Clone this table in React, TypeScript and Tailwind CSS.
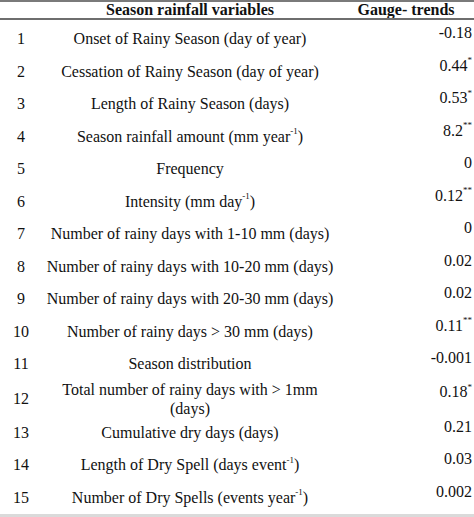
import React from "react";

type Row = { n: string; label: React.ReactNode; v: React.ReactNode; tall?: boolean };

const Sup = ({ children }: { children: React.ReactNode }) => (
  <sup className="text-[9px] relative top-[-1px] align-super leading-none">{children}</sup>
);

const rows: Row[] = [
  { n: "1", label: "Onset of Rainy Season (day of year)", v: <>-0.18</> },
  { n: "2", label: "Cessation of Rainy Season (day of year)", v: <>0.44<Sup>*</Sup></> },
  { n: "3", label: "Length of Rainy Season (days)", v: <>0.53<Sup>*</Sup></> },
  { n: "4", label: <>Season rainfall amount (mm year<Sup>-1</Sup>)</>, v: <>8.2<Sup>**</Sup></> },
  { n: "5", label: "Frequency", v: <>0</> },
  { n: "6", label: <>Intensity (mm day<Sup>-1</Sup>)</>, v: <>0.12<Sup>**</Sup></> },
  { n: "7", label: "Number of rainy days with 1-10 mm (days)", v: <>0</> },
  { n: "8", label: "Number of rainy days with 10-20 mm (days)", v: <>0.02</> },
  { n: "9", label: "Number of rainy days with 20-30 mm (days)", v: <>0.02</> },
  { n: "10", label: "Number of rainy days >  30 mm (days)", v: <>0.11<Sup>**</Sup></> },
  { n: "11", label: "Season distribution", v: <>-0.001</> },
  { n: "12", label: <>Total number of rainy days with &gt; 1mm<br />(days)</>, v: <>0.18<Sup>*</Sup></>, tall: true },
  { n: "13", label: "Cumulative dry days (days)", v: <>0.21</> },
  { n: "14", label: <>Length of Dry Spell (days event<Sup>-1</Sup>)</>, v: <>0.03</> },
  { n: "15", label: <>Number of Dry Spells (events year<Sup>-1</Sup>)</>, v: <>0.002</> },
];

export default function App() {
  return (
    <div
      className="w-[474px] h-[517px] bg-white text-[#111] overflow-hidden flex flex-col"
      style={{ fontFamily: "'Liberation Serif', 'DejaVu Serif', serif" }}
    >
      <div className="h-[2px] bg-[#7a7a7a]" />
      <div className="grid grid-cols-[42px_296px_1fr] h-[21px] items-center font-bold text-[16px] leading-none">
        <div />
        <div className="text-center">Season rainfall variables</div>
        <div className="text-center">Gauge- trends</div>
      </div>
      <div className="h-[2px] bg-[#6e6e6e]" />
      <div className="flex flex-col text-[16px] leading-[18px] pt-[3px]">
        {rows.map((r) => (
          <div
            key={r.n}
            className={`grid grid-cols-[42px_296px_1fr] ${r.tall ? "h-[36px]" : "h-[32.5px]"} items-center`}
          >
            <div className="text-center">{r.n}</div>
            <div className={`text-center ${r.tall ? "leading-[19px]" : ""}`}>{r.label}</div>
            <div className={`text-right pr-[2px] whitespace-nowrap ${r.tall ? "self-start pt-[3px]" : "pb-[12px]"}`}>{r.v}</div>
          </div>
        ))}
      </div>
      <div className="flex-1" />
      <div className="h-[4px] bg-[#dadada]" />
    </div>
  );
}
